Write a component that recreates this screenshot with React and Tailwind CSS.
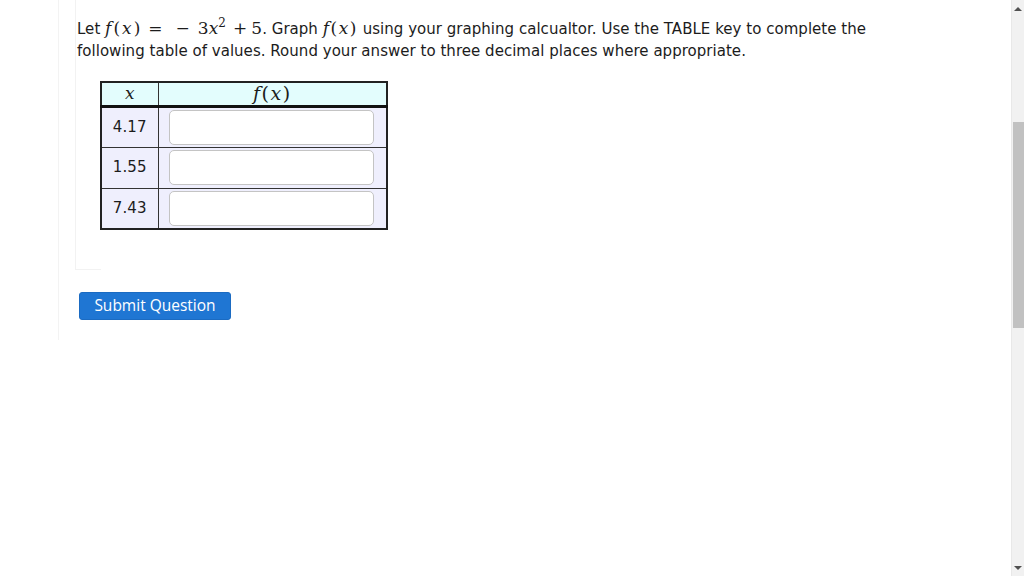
import React from "react"

const rows = ["4.17", "1.55", "7.43"]

const serif = "font-['DejaVu_Serif',serif]"

function Fx({ size = "text-[17px]", track = "tracking-[1.5px]" }) {
  return (
    <span className={`${serif} ${size} ${track}`}>
      <i>f</i>(<i>x</i>)
    </span>
  )
}

function Scrollbar() {
  return (
    <div className="w-[13px] h-full shrink-0 bg-[#f1f1f1] border-l border-[#e8e8e8] flex flex-col items-center">
      <div className="h-[17px] w-full flex items-center justify-center">
        <div className="w-0 h-0 border-l-[4px] border-r-[4px] border-b-[4px] border-l-transparent border-r-transparent border-b-[#505050]"></div>
      </div>
      <div className="h-[105px]"></div>
      <div className="w-[11px] h-[206px] bg-[#c1c1c1]"></div>
      <div className="flex-1"></div>
      <div className="h-[17px] w-full flex items-center justify-center">
        <div className="w-0 h-0 border-l-[4px] border-r-[4px] border-t-[4px] border-l-transparent border-r-transparent border-t-[#505050]"></div>
      </div>
    </div>
  )
}

export default function App() {
  return (
    <div className="h-[576px] w-full flex overflow-hidden bg-white text-[#1c1c1c] font-['DejaVu_Sans',sans-serif]">
      <div className="flex-1 min-w-0">
        <div className="ml-[58px] border-l border-[#f3f3f3] h-[340px] pl-[16px]">
          <div className="border-l border-b border-[#f2f2f2] h-[270px] w-[26px] relative">
            <div className="absolute left-0 top-[17px] w-[880px] pl-px">
              <p className="text-[15px] leading-[22px] tracking-[0.03px]">
                Let{" "}
                <span className={`${serif} text-[17px]`}>
                  <span className="tracking-[2px]">
                    <i>f</i>(<i>x</i>)
                  </span>
                  <span className="inline-block w-[6px]"></span>=
                  <span className="inline-block w-[13px]"></span>−
                  <span className="inline-block w-[8px]"></span>3<i>x</i>
                  <span className="inline-block align-[7px] text-[12px] leading-none">2</span>
                  <span className="inline-block w-[7px]"></span>+
                  <span className="inline-block w-[4px]"></span>5
                </span>
                . Graph <Fx /> using your graphing calcualtor. Use the TABLE key to complete the
                <br />
                following table of values. Round your answer to three decimal places where
                appropriate.
              </p>
              <table className="mt-[19px] ml-[23px] border-collapse border-2 border-[#222]">
                <thead>
                  <tr className="bg-[#e3fdfd] border-b-[3px] border-[#111]">
                    <th
                      className={`w-[57px] h-[24px] border border-[#333] font-normal ${serif} italic text-[17px] leading-none`}
                    >
                      x
                    </th>
                    <th className="w-[229px] h-[24px] border border-[#333] font-normal leading-none">
                      <Fx size="text-[19px]" track="tracking-[1.5px]" />
                    </th>
                  </tr>
                </thead>
                <tbody>
                  {rows.map((r) => (
                    <tr key={r} className="bg-[#efeffd]">
                      <td className="h-[41px] border border-[#333] text-center text-[15px] tracking-[0.2px]">
                        {r}
                      </td>
                      <td className="h-[41px] border border-[#333] pl-[10px] pr-[12px]">
                        <input
                          type="text"
                          className="block w-[205px] h-[35px] rounded-[5px] border border-[#c4c4c4] bg-white"
                        />
                      </td>
                    </tr>
                  ))}
                </tbody>
              </table>
            </div>
          </div>
          <button
            type="button"
            className="mt-[22px] ml-[4px] w-[152px] h-[28px] rounded-[3px] bg-[#1f76d3] border border-[#1b6bc2] text-white text-[15.5px] leading-none font-['Open_Sans',sans-serif]"
          >
            Submit Question
          </button>
        </div>
      </div>
      <Scrollbar />
    </div>
  )
}
